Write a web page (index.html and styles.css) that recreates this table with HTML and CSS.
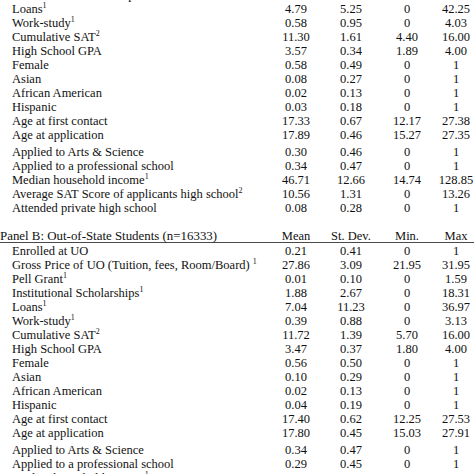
FILE: index.html
```html
<!DOCTYPE html>
<html>
<head>
<meta charset="utf-8">
<link rel="stylesheet" href="styles.css">
</head>
<body>
<div class="page">
<table class="stats">
<colgroup>
<col class="c-label"><col class="c-mean"><col class="c-sd"><col class="c-min"><col class="c-max">
</colgroup>
<tbody>
<tr><td class="lab">Institutional Scholarships<sup>1</sup></td><td>1.02</td><td>2.35</td><td>0</td><td>17.48</td></tr>
<tr><td class="lab">Loans<sup>1</sup></td><td>4.79</td><td>5.25</td><td>0</td><td>42.25</td></tr>
<tr><td class="lab">Work-study<sup>1</sup></td><td>0.58</td><td>0.95</td><td>0</td><td>4.03</td></tr>
<tr><td class="lab">Cumulative SAT<sup>2</sup></td><td>11.30</td><td>1.61</td><td>4.40</td><td>16.00</td></tr>
<tr><td class="lab">High School GPA</td><td>3.57</td><td>0.34</td><td>1.89</td><td>4.00</td></tr>
<tr><td class="lab">Female</td><td>0.58</td><td>0.49</td><td>0</td><td>1</td></tr>
<tr><td class="lab">Asian</td><td>0.08</td><td>0.27</td><td>0</td><td>1</td></tr>
<tr><td class="lab">African American</td><td>0.02</td><td>0.13</td><td>0</td><td>1</td></tr>
<tr><td class="lab">Hispanic</td><td>0.03</td><td>0.18</td><td>0</td><td>1</td></tr>
<tr><td class="lab">Age at first contact</td><td>17.33</td><td>0.67</td><td>12.17</td><td>27.38</td></tr>
<tr><td class="lab">Age at application</td><td>17.89</td><td>0.46</td><td>15.27</td><td>27.35</td></tr>
<tr class="gap"><td class="lab">Applied to Arts &amp; Science</td><td>0.30</td><td>0.46</td><td>0</td><td>1</td></tr>
<tr><td class="lab">Applied to a professional school</td><td>0.34</td><td>0.47</td><td>0</td><td>1</td></tr>
<tr><td class="lab">Median household income<sup>1</sup></td><td>46.71</td><td>12.66</td><td>14.74</td><td>128.85</td></tr>
<tr><td class="lab">Average SAT Score of applicants high school<sup>2</sup></td><td>10.56</td><td>1.31</td><td>0</td><td>13.26</td></tr>
<tr><td class="lab">Attended private high school</td><td>0.08</td><td>0.28</td><td>0</td><td>1</td></tr>
<tr class="spacer"><td colspan="5"></td></tr>
<tr class="head"><td class="panel">Panel B: Out-of-State Students (n=16333)</td><td>Mean</td><td>St. Dev.</td><td>Min.</td><td>Max</td></tr>
<tr class="first"><td class="lab">Enrolled at UO</td><td>0.21</td><td>0.41</td><td>0</td><td>1</td></tr>
<tr><td class="lab">Gross Price of UO (Tuition, fees, Room/Board) <sup>1</sup></td><td>27.86</td><td>3.09</td><td>21.95</td><td>31.95</td></tr>
<tr><td class="lab">Pell Grant<sup>1</sup></td><td>0.01</td><td>0.10</td><td>0</td><td>1.59</td></tr>
<tr><td class="lab">Institutional Scholarships<sup>1</sup></td><td>1.88</td><td>2.67</td><td>0</td><td>18.31</td></tr>
<tr><td class="lab">Loans<sup>1</sup></td><td>7.04</td><td>11.23</td><td>0</td><td>36.97</td></tr>
<tr><td class="lab">Work-study<sup>1</sup></td><td>0.39</td><td>0.88</td><td>0</td><td>3.13</td></tr>
<tr><td class="lab">Cumulative SAT<sup>2</sup></td><td>11.72</td><td>1.39</td><td>5.70</td><td>16.00</td></tr>
<tr><td class="lab">High School GPA</td><td>3.47</td><td>0.37</td><td>1.80</td><td>4.00</td></tr>
<tr><td class="lab">Female</td><td>0.56</td><td>0.50</td><td>0</td><td>1</td></tr>
<tr><td class="lab">Asian</td><td>0.10</td><td>0.29</td><td>0</td><td>1</td></tr>
<tr><td class="lab">African American</td><td>0.02</td><td>0.13</td><td>0</td><td>1</td></tr>
<tr><td class="lab">Hispanic</td><td>0.04</td><td>0.19</td><td>0</td><td>1</td></tr>
<tr><td class="lab">Age at first contact</td><td>17.40</td><td>0.62</td><td>12.25</td><td>27.53</td></tr>
<tr><td class="lab">Age at application</td><td>17.80</td><td>0.45</td><td>15.03</td><td>27.91</td></tr>
<tr class="gap"><td class="lab">Applied to Arts &amp; Science</td><td>0.34</td><td>0.47</td><td>0</td><td>1</td></tr>
<tr><td class="lab">Applied to a professional school</td><td>0.29</td><td>0.45</td><td>0</td><td>1</td></tr>
<tr><td class="lab">Median household income<sup>1</sup></td><td>44.37</td><td>17.44</td><td>1.71</td><td>141.11</td></tr>
<tr><td class="lab">Average SAT Score of applicants high school<sup>2</sup></td><td>11.02</td><td>1.24</td><td>0</td><td>13.26</td></tr>
</tbody>
</table>
</div>
</body>
</html>
```
FILE: styles.css
```css
html, body {
  margin: 0;
  padding: 0;
  background: #ffffff;
  overflow: hidden;
}
.page {
  width: 474px;
  height: 474px;
  overflow: hidden;
}
.stats {
  margin-top: -12px;
  border-collapse: collapse;
  table-layout: fixed;
  width: 476px;
  font-family: "Liberation Serif", "Times New Roman", serif;
  font-size: 12.5px;
  line-height: 14px;
  color: #111111;
}
.c-label { width: 268px; }
.c-mean { width: 56px; }
.c-sd { width: 54px; }
.c-min { width: 58px; }
.c-max { width: 40px; }
.stats td {
  padding: 0;
  text-align: center;
  white-space: nowrap;
  overflow: visible;
}
.stats td.lab {
  text-align: left;
  padding-left: 12px;
}
.stats sup {
  font-size: 8px;
  line-height: 0;
  vertical-align: 5px;
}
.gap td {
  padding-top: 3px;
}
.spacer td {
  height: 15px;
}
.head td {
  line-height: 12px;
  border-bottom: 1px solid #4a4a4a;
}
.head td.panel {
  text-align: left;
  padding-left: 0;
  font-size: 12.9px;
}
.first td {
  padding-top: 1px;
}
```
